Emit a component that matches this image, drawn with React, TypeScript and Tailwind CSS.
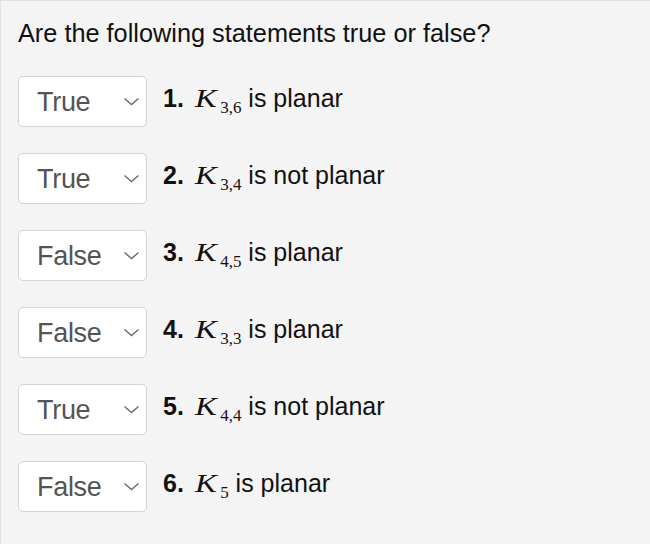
import React from 'react';

type Item = { answer: string; n: number; sub: string; rest: string };

const items: Item[] = [
  { answer: 'True', n: 1, sub: '3,6', rest: 'is planar' },
  { answer: 'True', n: 2, sub: '3,4', rest: 'is not planar' },
  { answer: 'False', n: 3, sub: '4,5', rest: 'is planar' },
  { answer: 'False', n: 4, sub: '3,3', rest: 'is planar' },
  { answer: 'True', n: 5, sub: '4,4', rest: 'is not planar' },
  { answer: 'False', n: 6, sub: '5', rest: 'is planar' },
];

const Chevron = () => (
  <svg width="17" height="9" viewBox="0 0 17 9" className="shrink-0">
    <polyline points="1.5,1.5 8.5,7.5 15.5,1.5" fill="none" stroke="#6b6b6b" strokeWidth="1.4" />
  </svg>
);

const Row = ({ item }: { item: Item }) => (
  <div className="flex items-start">
    <div className="flex h-[51px] w-[129px] shrink-0 items-center justify-between rounded-[5px] border border-[#d4d4d4] bg-white pl-[18px] pr-[6px]">
      <span className="text-[27px] leading-[30px] tracking-[-0.3px] text-[#545454]">{item.answer}</span>
      <Chevron />
    </div>
    <div className="ml-[16px] mt-[7px] flex items-baseline whitespace-pre text-[25px] leading-[30px] text-[#111]">
      <span className="font-bold">{item.n}.</span>
      <span> </span>
      <span className="ml-[4px] mr-[8px] inline-block origin-left scale-x-[1.25] font-['Liberation_Serif',serif] text-[26px] italic">K</span>
      <span className="relative top-[6px] font-['Liberation_Serif',serif] text-[17px] leading-none">{item.sub}</span>
      <span> {item.rest}</span>
    </div>
  </div>
);

export default function App() {
  return (
    <div className="h-[544px] w-[650px] border-l border-t border-[#e2e2e2] bg-[#f4f4f4] pl-[17px] pt-[17px] font-['Liberation_Sans',Arial,sans-serif]">
      <div className="text-[25.3px] leading-[30px] text-[#111]">Are the following statements true or false?</div>
      <div className="mt-[28px] flex flex-col gap-[26px]">
        {items.map((item) => (
          <Row key={item.n} item={item} />
        ))}
      </div>
    </div>
  );
}
